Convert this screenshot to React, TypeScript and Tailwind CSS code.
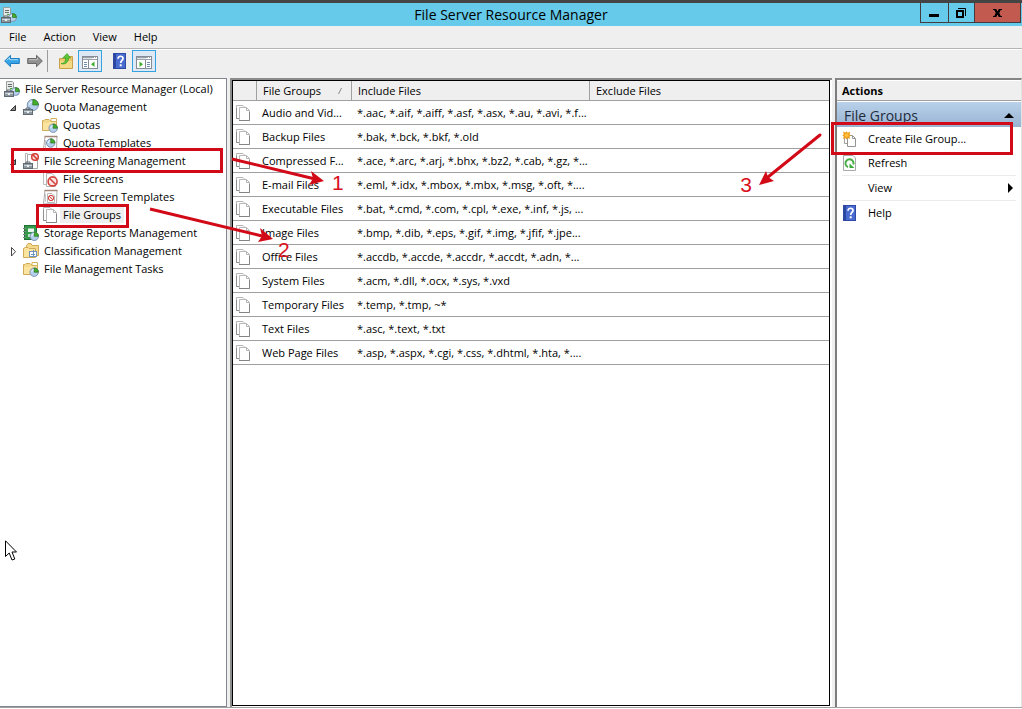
import React from "react";

type IconProps = { children: React.ReactNode };

function Icon({ children }: IconProps) {
  return (
    <svg viewBox="0 0 16 16" className="size-4 shrink-0" aria-hidden="true">
      {children}
    </svg>
  );
}

/* ---------- shared drawing parts ---------- */

function Pie({ x, y, r }: { x: number; y: number; r: number }) {
  return (
    <g transform={`translate(${x} ${y})`}>
      <circle r={r} fill="#b4cfec" stroke="#7d93b3" strokeWidth="1" />
      <path d={`M0 0V${-r}A${r} ${r} 0 0 1 ${r} 0Z`} fill="#45b02c" stroke="#28701f" strokeWidth="0.7" />
      <path d={`M${-r * 0.6} 0A${r * 0.6} ${r * 0.6} 0 0 1 ${-r * 0.1} ${-r * 0.6}`} fill="none" stroke="#eef6fd" strokeWidth="1" />
    </g>
  );
}

function NoSign({ x, y, r, w = 1.6 }: { x: number; y: number; r: number; w?: number }) {
  const d = r * 0.7;
  return (
    <g transform={`translate(${x} ${y})`}>
      <circle r={r} fill="#f9e6e4" stroke="#d5453d" strokeWidth={w} />
      <path d={`M${-d} ${-d}L${d} ${d}`} stroke="#d5453d" strokeWidth={w} />
    </g>
  );
}

function Toolbox() {
  return (
    <g>
      <path d="M3 10.500V9H7V10.500" fill="none" stroke="#5b666e" />
      <rect x="0.500" y="10.500" width="9" height="5" fill="#8d989f" stroke="#5f6a72" />
      <path d="M1 12.500H9" stroke="#c9d2d8" />
      <path d="M4 12H6V14H4Z" fill="#eceff1" />
    </g>
  );
}

function FolderShape() {
  return (
    <g>
      <path d="M.5 13.500V3.500H2L3 2.500H7L8 3.500H14.500V13.500Z" fill="#f3d98b" stroke="#cfab59" />
      <path d="M9 1.500H14.500V4.500H9Z" fill="#fff" stroke="#d3b25e" />
      <path d="M1 6H6L7 5H14V13H1Z" fill="#fae4a0" />
    </g>
  );
}

/* ---------- icons ---------- */

function ServerIcon() {
  return (
    <Icon>
      <path d="M2.500 .5H8.500L9.500 1.500V11H2.500Z" fill="#e6e9e8" stroke="#989f9d" />
      <path d="M4 3.500H8M4 5.500H8" stroke="#66716e" />
      <rect x="6" y="7" width="2" height="1" fill="#3fae2a" />
      <Pie x={11.5} y={10.5} r={4} />
      <Toolbox />
    </Icon>
  );
}

function QuotaIcon() {
  return (
    <Icon>
      <Pie x={9.8} y={6} r={5.6} />
      <Toolbox />
    </Icon>
  );
}

function FolderPieIcon() {
  return (
    <Icon>
      <FolderShape />
      <Pie x={11.2} y={11.2} r={4.2} />
    </Icon>
  );
}

function TemplatePage() {
  return (
    <g>
      <path d="M3 1.500H15L14.500 14.500H1.500Z" fill="#fff" stroke="#b0aaa6" />
      <path d="M2.500 1.500H15.500" stroke="#a58578" strokeWidth="1.500" />
      <path d="M3.500 5V13M1.500 14.500H15" stroke="#c4c8cc" />
    </g>
  );
}

function QuotaTemplateIcon() {
  return (
    <Icon>
      <TemplatePage />
      <Pie x={8.7} y={8} r={4.2} />
    </Icon>
  );
}

function ScreeningIcon() {
  return (
    <Icon>
      <path d="M4.500 .5H2.500V11" fill="none" stroke="#b4b4b4" />
      <path d="M4.500 1.500H11L14.500 5V15.500H4.500Z" fill="#fff" stroke="#a8a8a8" />
      <NoSign x={12} y={4} r={3.3} />
      <Toolbox />
    </Icon>
  );
}

function ScreensIcon() {
  return (
    <Icon>
      <path d="M4 1.500H1.500V13.500H4" fill="none" stroke="#bdbdbd" />
      <path d="M4.500 2.500H10L13.500 6V15.500H4.500Z" fill="#fff" stroke="#b4b4b4" />
      <NoSign x={10.6} y={10.4} r={4.500} />
    </Icon>
  );
}

function ScreenTemplateIcon() {
  return (
    <Icon>
      <TemplatePage />
      <path d="M5.500 4.500H10L12.500 7V13.500H5.500Z" fill="#fff" stroke="#b8b8b8" />
      <NoSign x={9} y={9} r={2.7} w={1} />
    </Icon>
  );
}

function PagesIcon() {
  return (
    <Icon>
      <path d="M4.500 13.500H1.500V.5H8L9.500 2" fill="none" stroke="#b4b4b4" />
      <path d="M1.500 3V13.500H4" fill="none" stroke="#8f8f8f" />
      <path d="M4.500 2.500H11.500L14.500 5.500V15.500H4.500Z" fill="#fff" stroke="#b9b9b9" />
      <path d="M11.500 2.500V5.500H14.500" fill="none" stroke="#b4b4b4" />
      <path d="M14.500 7V15.500H4" fill="none" stroke="#858585" />
    </Icon>
  );
}

function ReportsIcon() {
  return (
    <Icon>
      <rect x="1.500" y=".5" width="12" height="14" fill="#35994a" stroke="#1f6e35" />
      <path d="M0 3.500H3M0 6.500H3M0 9.500H3M0 12.500H3" stroke="#7b8a80" />
      <path d="M5 3.500H11V7H5Z" fill="#e9f6eb" />
      <path d="M5 9H8V12H5Z" fill="#bfe3c6" />
      <Pie x={11.3} y={11.3} r={4.2} />
    </Icon>
  );
}

function ClassificationIcon() {
  return (
    <Icon>
      <path d="M3.500 8V2.500L5 .5H8L9 2.500H15.500V12.500H3.500Z" fill="#f3d98b" stroke="#cfab59" />
      <path d="M.5 14.500V5.500L2 4.500H5L6 5.500H12.500V14.500Z" fill="#fae4a0" stroke="#cfab59" />
      <rect x="6.500" y="8.500" width="7" height="5" fill="#fff" stroke="#6d94bd" />
      <path d="M8 11.500H12M10.500 7V13" stroke="#6d94bd" />
    </Icon>
  );
}

function HelpIcon() {
  return (
    <Icon>
      <rect x="1.500" y=".5" width="12" height="15" fill="#4a6bd0" stroke="#2f4aa5" />
      <path d="M3 1V15" stroke="#2c479f" strokeWidth="2" />
      <path d="M6 5.800C6 2.300 11.300 2.500 11 5.600C10.800 7.500 8.700 7.500 8.700 10" fill="none" stroke="#fff" strokeWidth="1.700" />
      <rect x="7.700" y="11.300" width="2" height="2" fill="#fff" />
    </Icon>
  );
}

function BackIcon() {
  return (
    <Icon>
      <path d="M.7 8L6.500 2.300V5.500H15.300V10.500H6.500V13.700Z" fill="#35a3e6" stroke="#1f7dc0" />
      <path d="M2.500 7.500L5.500 4.700V6.700H14" fill="none" stroke="#9fdcfb" />
    </Icon>
  );
}

function ForwardIcon() {
  return (
    <Icon>
      <path d="M15.300 8L9.500 2.300V5.500H.7V10.500H9.500V13.700Z" fill="#909090" stroke="#696969" />
      <path d="M2 6.700H10.500V4.800" fill="none" stroke="#c2c2c2" />
    </Icon>
  );
}

function UpFolderIcon() {
  return (
    <Icon>
      <path d="M1.500 15.500V5.500H7.500L8.500 3.500H14.500V15.500Z" fill="#ecc668" stroke="#caa04a" />
      <path d="M2 8H14V15H2Z" fill="#f6d985" />
      <path d="M3 10.500C6.500 10.500 7.800 8 7.500 5H4.800L9 .6L12.500 5H10.500C10.500 9.500 7 12 3 10.500Z" fill="#5bc738" stroke="#3d9b25" strokeWidth=".7" />
    </Icon>
  );
}

function PaneIcon({ side }: { side: "left" | "right" }) {
  return (
    <svg viewBox="0 0 16 13" className="h-[13px] w-4" aria-hidden="true">
      <rect x=".5" y=".5" width="15" height="12" fill="#fff" stroke="#858c96" />
      <path d="M1 1.500H15M1 3.500H15" stroke="#9aa1aa" />
      <path d="M1 2.500H10" stroke="#dfe3e8" />
      <path d="M12 1.500H13M14 1.500H15" stroke="#fff" />
      {side === "left" ? (
        <g>
          <path d="M6.500 4V12" stroke="#858c96" />
          <path d="M2 6.500H5M2 8.500H5M2 10.500H5" stroke="#6f8db3" />
          <path d="M12.500 5.500V11L9 8.300Z" fill="#3fae2a" />
        </g>
      ) : (
        <g>
          <path d="M9.500 4V12" stroke="#858c96" />
          <path d="M11 6.500H14M11 8.500H14M11 10.500H14" stroke="#6f8db3" />
          <path d="M3.500 5.500V11L7 8.300Z" fill="#3fae2a" />
        </g>
      )}
    </svg>
  );
}

function CreateIcon() {
  return (
    <Icon>
      <path d="M2.500 6V12.500H5" fill="none" stroke="#a0a0a0" />
      <path d="M5.500 4.500H10.500L13.500 7.500V15.500H5.500Z" fill="#fff" stroke="#949494" />
      <path d="M10.500 5V7.500H13" fill="none" stroke="#949494" />
      <path d="M1 .5L3.400 1.600L4.700 .2L5.600 1.800L8.300 .8L7.600 3.300L9 4.500L7.500 5.500L8.300 8L5.600 7L4.500 8.500L3.400 7L1 8.200L1.700 5.500L.4 4.300L1.700 3.200Z" fill="#f0a01e" />
      <circle cx="4.600" cy="4.300" r="1.800" fill="#fcc23e" />
    </Icon>
  );
}

function RefreshIcon() {
  return (
    <Icon>
      <path d="M1.500 .5H11L13.500 3V15.500H1.500Z" fill="#fff" stroke="#a8a8a8" />
      <path d="M6 12A4 4 0 1 1 11.300 9.500" fill="none" stroke="#46ad42" strokeWidth="2" />
      <path d="M7.500 8.500L12.500 13H7.500Z" fill="#3cab39" />
    </Icon>
  );
}

/* ---------- data ---------- */

type Node = {
  label: string;
  icon: React.ReactNode;
  level: 0 | 1 | 2;
  state?: "open" | "closed";
  selected?: boolean;
};

const tree: Node[] = [
  { label: "File Server Resource Manager (Local)", icon: <ServerIcon />, level: 0 },
  { label: "Quota Management", icon: <QuotaIcon />, level: 1, state: "open" },
  { label: "Quotas", icon: <FolderPieIcon />, level: 2 },
  { label: "Quota Templates", icon: <QuotaTemplateIcon />, level: 2 },
  { label: "File Screening Management", icon: <ScreeningIcon />, level: 1, state: "open" },
  { label: "File Screens", icon: <ScreensIcon />, level: 2 },
  { label: "File Screen Templates", icon: <ScreenTemplateIcon />, level: 2 },
  { label: "File Groups", icon: <PagesIcon />, level: 2, selected: true },
  { label: "Storage Reports Management", icon: <ReportsIcon />, level: 1 },
  { label: "Classification Management", icon: <ClassificationIcon />, level: 1, state: "closed" },
  { label: "File Management Tasks", icon: <FolderPieIcon />, level: 1 },
];

const indent = { 0: "pl-1", 1: "pl-2", 2: "pl-[42px]" };

const groups: [string, string][] = [
  ["Audio and Vid...", "*.aac, *.aif, *.aiff, *.asf, *.asx, *.au, *.avi, *.f..."],
  ["Backup Files", "*.bak, *.bck, *.bkf, *.old"],
  ["Compressed F...", "*.ace, *.arc, *.arj, *.bhx, *.bz2, *.cab, *.gz, *..."],
  ["E-mail Files", "*.eml, *.idx, *.mbox, *.mbx, *.msg, *.oft, *...."],
  ["Executable Files", "*.bat, *.cmd, *.com, *.cpl, *.exe, *.inf, *.js, ..."],
  ["Image Files", "*.bmp, *.dib, *.eps, *.gif, *.img, *.jfif, *.jpe..."],
  ["Office Files", "*.accdb, *.accde, *.accdr, *.accdt, *.adn, *..."],
  ["System Files", "*.acm, *.dll, *.ocx, *.sys, *.vxd"],
  ["Temporary Files", "*.temp, *.tmp, ~*"],
  ["Text Files", "*.asc, *.text, *.txt"],
  ["Web Page Files", "*.asp, *.aspx, *.cgi, *.css, *.dhtml, *.hta, *...."],
];

/* ---------- window parts ---------- */

function TitleBar() {
  return (
    <header className="grid h-[26px] shrink-0 grid-cols-[1fr_auto_1fr] border-t-[3px] border-[#444] bg-[#66caea]">
      <div className="flex items-center pl-px">
        <ServerIcon />
      </div>
      <h1 className="self-center text-[14px] leading-5">File Server Resource Manager</h1>
      <div className="mr-px flex h-5 justify-self-end border border-t-0 border-[#443c3c]">
        <button type="button" aria-label="Minimize" className="flex w-[27px] items-center justify-center">
          <svg viewBox="0 0 12 12" className="size-3" aria-hidden="true">
            <path d="M0 8.500H10" stroke="#000" strokeWidth="3" />
          </svg>
        </button>
        <button type="button" aria-label="Restore" className="flex w-[26px] items-center justify-center border-l border-[#443c3c]">
          <svg viewBox="0 0 12 12" className="size-3" aria-hidden="true">
            <rect x="1" y="4" width="6" height="6" fill="none" stroke="#000" strokeWidth="2" />
            <path d="M2 1.500H9.500V9" fill="none" stroke="#000" />
          </svg>
        </button>
        <button type="button" aria-label="Close" className="flex w-[46px] items-center justify-center border-l border-[#443c3c] bg-[#c25a50]">
          <svg viewBox="0 0 12 12" className="size-3" aria-hidden="true">
            <path d="M1 2H4.500V3H5V4H6V3H6.500V2H10V3H8.500V4H8V5H7.500V7H8V8H8.500V9H10V10H6.500V9H6V8H5V9H4.500V10H1V9H2.500V8H3V7H3.500V5H3V4H2.500V3H1Z" fill="#000" />
          </svg>
        </button>
      </div>
    </header>
  );
}

function MenuBar() {
  return (
    <nav aria-label="Menu" className="flex h-[23px] shrink-0 items-center gap-[17px] border-b border-[#b4b4b4] pl-[9px]">
      <button type="button">File</button>
      <button type="button">Action</button>
      <button type="button">View</button>
      <button type="button">Help</button>
    </nav>
  );
}

function ToolBar() {
  return (
    <div role="toolbar" aria-label="Tools" className="flex h-[29px] shrink-0 items-start border-t border-white pl-1">
      <div className="flex h-[22px] items-center gap-[7px] border-r border-[#9c9c9c] pr-1">
        <button type="button" aria-label="Back"><BackIcon /></button>
        <button type="button" aria-label="Forward"><ForwardIcon /></button>
      </div>
      <div className="flex h-[22px] items-center pl-[10px]">
        <button type="button" aria-label="Up one level"><UpFolderIcon /></button>
        <button
          type="button"
          aria-label="Show or hide console tree"
          className="ml-1 flex h-[22px] w-6 items-center justify-center border border-[#35a1e0] bg-[#ddeaf6] pt-[3px]"
        >
          <PaneIcon side="left" />
        </button>
        <button type="button" aria-label="Help" className="ml-[10px]"><HelpIcon /></button>
        <button
          type="button"
          aria-label="Show or hide action pane"
          className="ml-1 flex h-[22px] w-6 items-center justify-center border border-[#35a1e0] bg-[#ddeaf6] pt-[3px]"
        >
          <PaneIcon side="right" />
        </button>
      </div>
    </div>
  );
}

function Expander({ state }: { state?: "open" | "closed" }) {
  return (
    <svg viewBox="0 0 10 10" className="mr-[5px] size-[10px] shrink-0" aria-hidden="true">
      {state === "open" && <path d="M7.500 3.500V8.500H2.500Z" fill="#8a8a8a" stroke="#333" />}
      {state === "closed" && <path d="M3.500 1.500V10L7.500 5.700Z" fill="#fff" stroke="#444" />}
    </svg>
  );
}

function ConsoleTree() {
  return (
    <aside className="w-[227px] shrink-0 border-t border-r border-b border-[#828790] bg-white pt-px">
      <ul>
        {tree.map((n) => (
          <li key={n.label}>
            <button type="button" className={`flex h-[18px] w-full items-center whitespace-nowrap ${indent[n.level]}`}>
              {n.level === 1 && <Expander state={n.state} />}
              {n.icon}
              <span className={n.selected ? "ml-[2px] bg-[#efefef] px-[3px]" : "ml-[5px]"}>{n.label}</span>
            </button>
          </li>
        ))}
      </ul>
    </aside>
  );
}

function GroupTable() {
  return (
    <main className="ml-[3px] min-w-0 flex-1 border-t-2 border-l-2 border-[#8c8c8c] bg-white pr-[2px] pb-px">
      <div className="h-full border border-black bg-white">
        <table className="w-full table-fixed border-separate border-spacing-0 text-left">
          <colgroup>
            <col className="w-6" />
            <col className="w-[95px]" />
            <col className="w-[238px]" />
            <col />
          </colgroup>
          <thead className="bg-[#efefef]">
            <tr>
              <th aria-label="Icon" className="h-5 border-r border-b border-[#a0a0a0] p-0" />
              <th className="border-r border-b border-[#a0a0a0] p-0 pt-px pl-[6px] font-normal">
                <div className="flex items-center justify-between pr-2">
                  File Groups
                  <svg viewBox="0 0 6 8" className="h-2 w-[6px]" aria-hidden="true">
                    <path d="M1.500 7L4.500 1" stroke="#8a8a8a" />
                  </svg>
                </div>
              </th>
              <th className="border-r border-b border-[#a0a0a0] p-0 pt-px pl-[6px] font-normal">Include Files</th>
              <th className="border-b border-[#a0a0a0] p-0 pt-px pl-[6px] font-normal">Exclude Files</th>
            </tr>
          </thead>
          <tbody>
            {groups.map(([name, files]) => (
              <tr key={name}>
                <td className="h-6 border-b border-[#a0a0a0] p-0 pl-[2px]"><PagesIcon /></td>
                <td className="border-b border-[#a0a0a0] p-0 pl-[5px] whitespace-nowrap">{name}</td>
                <td className="border-b border-[#a0a0a0] p-0 pl-[5px] whitespace-nowrap">{files}</td>
                <td className="border-b border-[#a0a0a0] p-0" />
              </tr>
            ))}
          </tbody>
        </table>
      </div>
    </main>
  );
}

function ActionsPane() {
  return (
    <aside className="ml-[3px] w-[187px] shrink-0 border-t-2 border-r border-l-2 border-t-[#858585] border-r-[#e3e3e3] border-l-[#7c7c7c] bg-white">
      <h2 className="mt-px h-5 border-b border-[#a0a0a0] bg-[#efefef] pl-[5px] leading-5 font-bold">Actions</h2>
      <button type="button" className="mt-px flex h-[25px] w-full items-center justify-between bg-linear-to-b from-[#b9d1ea] to-[#98b3d2] pt-[2px] pr-[7px] pl-[7px] text-[14px] text-[#1e2b3c]">
        File Groups
        <svg viewBox="0 0 10 6" className="h-[6px] w-[10px]" aria-hidden="true">
          <path d="M0 5L5 0L10 5Z" fill="#000" />
        </svg>
      </button>
      <ul className="px-[5px]">
        <li>
          <button type="button" className="flex h-6 w-full items-center gap-[10px]"><CreateIcon />Create File Group...</button>
        </li>
        <li className="border-b border-[#ececec]">
          <button type="button" className="flex h-6 w-full items-center gap-[10px]"><RefreshIcon />Refresh</button>
        </li>
        <li className="border-b border-[#ececec]">
          <button type="button" className="flex h-6 w-full items-center justify-between pr-[3px] pl-[26px]">
            View
            <svg viewBox="0 0 5 10" className="h-[10px] w-[5px]" aria-hidden="true">
              <path d="M0 0L5 5L0 10Z" fill="#000" />
            </svg>
          </button>
        </li>
        <li>
          <button type="button" className="flex h-6 w-full items-center gap-[10px]"><HelpIcon />Help</button>
        </li>
      </ul>
    </aside>
  );
}

function Annotations() {
  return (
    <div className="pointer-events-none absolute inset-0 overflow-hidden font-['Liberation_Sans',sans-serif] text-[21px] leading-6 text-[#d8101c]">
      <div className="absolute top-[148px] left-[11px] h-[25px] w-[212px] border-[3px] border-[#d20a17]" />
      <div className="absolute top-[204px] left-[36px] h-6 w-[93px] border-[3px] border-[#d20a17]" />
      <div className="absolute top-[122px] right-[9px] h-[33px] w-[182px] border-[3px] border-[#d20a17]" />
      <svg viewBox="0 0 180 90" className="absolute top-[154px] left-[148px] h-[90px] w-[180px]" aria-hidden="true">
        <path d="M84 5L165 24.500M2 55L114 82" stroke="#d20a17" strokeWidth="3" />
        <path d="M176 27L161 31L165 24.500L163 17Z" fill="#d20a17" />
        <path d="M125 85L110 88L114 82L112 74Z" fill="#d20a17" />
      </svg>
      <svg viewBox="0 0 70 60" className="absolute top-[130px] right-[198px] h-[60px] w-[70px]" aria-hidden="true">
        <path d="M66 5L14 47" stroke="#d20a17" strokeWidth="3" strokeLinecap="round" />
        <path d="M5 55L12 41L14 47L20 51Z" fill="#d20a17" />
      </svg>
      <span className="absolute top-[171px] left-[332px]">1</span>
      <span className="absolute top-[238px] left-[278px]">2</span>
      <span className="absolute top-[173px] right-[270px]">3</span>
      <svg viewBox="0 0 12 21" className="absolute top-[540px] left-[5px] h-[21px] w-3" aria-hidden="true">
        <path d="M.5 .8V16.500L4.200 13L7 20L9.800 19L7 12H11.500Z" fill="#fff" stroke="#000" />
      </svg>
    </div>
  );
}

export default function App() {
  return (
    <div className="relative flex min-h-screen flex-col border-b border-white bg-[#efefef] font-['Open_Sans','Noto_Sans',sans-serif] text-[11px] leading-4 text-black">
      <TitleBar />
      <MenuBar />
      <ToolBar />
      <div className="flex flex-1 items-stretch border-b border-[#a0a0a0]">
        <ConsoleTree />
        <GroupTable />
        <ActionsPane />
      </div>
      <Annotations />
    </div>
  );
}
